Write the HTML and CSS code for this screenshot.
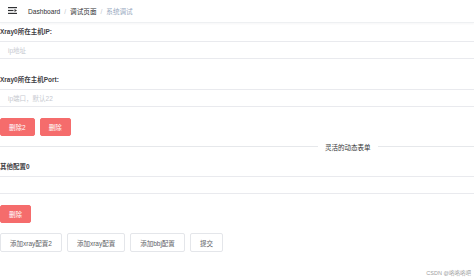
FILE: index.html
```html
<!DOCTYPE html>
<html lang="zh">
<head>
<meta charset="utf-8">
<title>系统调试</title>
<link rel="stylesheet" href="styles.css">
</head>
<body>
<div class="navbar">
  <svg class="hamburger" width="9" height="7" viewBox="0 0 9 7">
    <rect x="0" y="0" width="9" height="1.2" fill="#303133"/>
    <rect x="0" y="2.9" width="5.5" height="1.2" fill="#303133"/>
    <rect x="0" y="5.8" width="9" height="1.2" fill="#303133"/>
    <path d="M6.5 2 L9 3.5 L6.5 5 Z" fill="#303133"/>
  </svg>
  <div class="breadcrumb">
    <span class="crumb">Dashboard</span><span class="sep">/</span>
    <span class="crumb">调试页面</span><span class="sep">/</span>
    <span class="crumb last">系统调试</span>
  </div>
</div>

<div class="form">
  <div class="item">
    <div class="label">Xray0所在主机IP:</div>
    <div class="input"><span class="ph">ip地址</span></div>
  </div>
  <div class="item">
    <div class="label">Xray0所在主机Port:</div>
    <div class="input"><span class="ph">ip端口，默认22</span></div>
  </div>
  <div class="btn-row">
    <span class="btn danger">删除2</span>
    <span class="btn danger">删除</span>
  </div>

  <div class="divider">
    <span class="line left"></span>
    <span class="divider-text">灵活的动态表单</span>
    <span class="line right"></span>
  </div>

  <div class="item">
    <div class="label">其他配置0</div>
    <div class="input"><span class="ph"></span></div>
  </div>
  <div class="btn-row">
    <span class="btn danger">删除</span>
  </div>
  <div class="btn-row actions">
    <span class="btn plain">添加xray配置2</span>
    <span class="btn plain">添加xray配置</span>
    <span class="btn plain">添加bbj配置</span>
    <span class="btn plain">提交</span>
  </div>
</div>

<div class="watermark">CSDN @咯咯咯吧</div>
</body>
</html>
```

FILE: styles.css
```css
html, body {
  margin: 0;
  padding: 0;
  background: #ffffff;
  overflow: hidden;
  width: 474px;
  height: 280px;
}
body {
  position: relative;
  font-family: "Liberation Sans", "Noto Sans CJK SC", sans-serif;
  font-size: 6.5px;
  color: #606266;
}
.navbar {
  height: 22px;
  border-bottom: 1px solid #eef0f2;
  display: flex;
  align-items: center;
  padding-left: 8px;
  box-shadow: 0 1px 2px rgba(0, 21, 41, 0.04);
}
.hamburger {
  display: block;
  margin-top: -1px;
}
.breadcrumb {
  margin-left: 11px;
  display: flex;
  align-items: center;
  font-size: 6.6px;
}
.crumb { color: #303133; }
.crumb.last { color: #97a8be; }
.sep {
  color: #c0c4cc;
  margin: 0 4px;
}
.form {
  width: 100%;
}
.item {
  margin-bottom: 12px;
}
.label {
  height: 18px;
  line-height: 18px;
  font-weight: bold;
  color: #3f4145;
}
.input {
  height: 16px;
  border-top: 1px solid #e9eaee;
  border-bottom: 1px solid #e9eaee;
  display: flex;
  align-items: center;
  padding-left: 8px;
}
.ph {
  color: #c6c9cf;
}
.btn-row {
  display: flex;
  gap: 5px;
  margin-top: -1px;
}
.btn {
  display: inline-flex;
  align-items: center;
  justify-content: center;
  box-sizing: border-box;
  height: 18px;
  border-radius: 2px;
  padding: 0 8px;
  white-space: nowrap;
}
.danger {
  background: #f56c6c;
  color: #ffffff;
  border: 1px solid #f56c6c;
}
.divider {
  display: flex;
  align-items: center;
  margin: 4px 0 5px;
  height: 13px;
}
.divider .line {
  height: 1px;
  background: #e6e8eb;
}
.divider .left { flex: 3.3; }
.divider .right { flex: 1; }
.divider-text {
  color: #303133;
  padding: 0 7px;
}
.actions {
  margin-top: 10px;
}
.plain {
  background: #ffffff;
  border: 1px solid #e4e6ea;
  color: #606266;
  height: 19px;
  padding: 0 9px;
}
.watermark {
  position: absolute;
  right: 3px;
  bottom: 3px;
  font-size: 5.5px;
  color: #a0a0a0;
}
```
